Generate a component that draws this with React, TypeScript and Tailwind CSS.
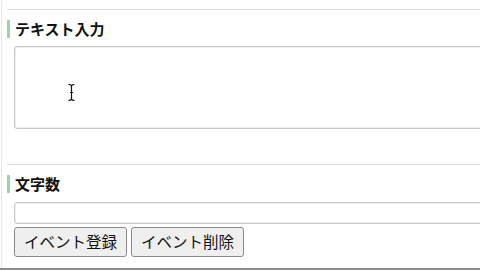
import React from "react";

const jp = { fontFamily: '"Noto Sans CJK JP", "Noto Sans", sans-serif' };

function Heading({ children }: { children: React.ReactNode }) {
  return (
    <div className="flex items-center h-[18px]">
      <div className="w-[3px] h-[18px] bg-[#9fd3a0] mr-[5px]" />
      <span className="text-[15px] font-bold leading-none text-[#111] -mt-[2px]">{children}</span>
    </div>
  );
}

export default function App() {
  return (
    <div className="w-[480px] h-[270px] bg-white overflow-hidden" style={jp}>
      <div className="h-[268px] ml-[1px] border-l border-[#e6e6e6] pl-[5px] pt-[9px] overflow-hidden">
        <div className="h-px bg-[#dcdcdc]" />
        <div className="pt-[10px]">
          <Heading>テキスト入力</Heading>
        </div>
        <div className="ml-[7px] mt-[8px] w-[520px] h-[83px] border border-[#c8c8c8] rounded-[3px] relative shadow-[inset_0_0_0_1px_#eeeeee]">
          <svg className="absolute left-[53px] top-[37px]" width="7" height="17" viewBox="0 0 7 17">
            <path d="M0.5 0.5 Q3.5 0.5 3.5 2.5 Q3.5 0.5 6.5 0.5 M3.5 2.5 V14.5 M0.5 16.5 Q3.5 16.5 3.5 14.5 Q3.5 16.5 6.5 16.5 M2 8.5 H5" fill="none" stroke="#111" strokeWidth="1.2" />
          </svg>
        </div>
        <div className="mt-[35px] h-px bg-[#dcdcdc]" />
        <div className="pt-[10px]">
          <Heading>文字数</Heading>
        </div>
        <div className="ml-[7px] mt-[9px] w-[520px] h-[22px] border border-[#c8c8c8] rounded-[3px] shadow-[inset_0_0_0_1px_#eeeeee]" />
        <div className="ml-[7px] mt-[3px] flex gap-[4px]">
          <button className="h-[30px] px-[9px] border border-[#8a8a8a] rounded-[3px] bg-[#efefef] text-[15.5px] text-[#111] leading-none">
            イベント登録
          </button>
          <button className="h-[30px] px-[9px] border border-[#8a8a8a] rounded-[3px] bg-[#efefef] text-[15.5px] text-[#111] leading-none">
            イベント削除
          </button>
        </div>
      </div>
      <div className="h-[2px] bg-[#8c8c8c]" />
    </div>
  );
}
